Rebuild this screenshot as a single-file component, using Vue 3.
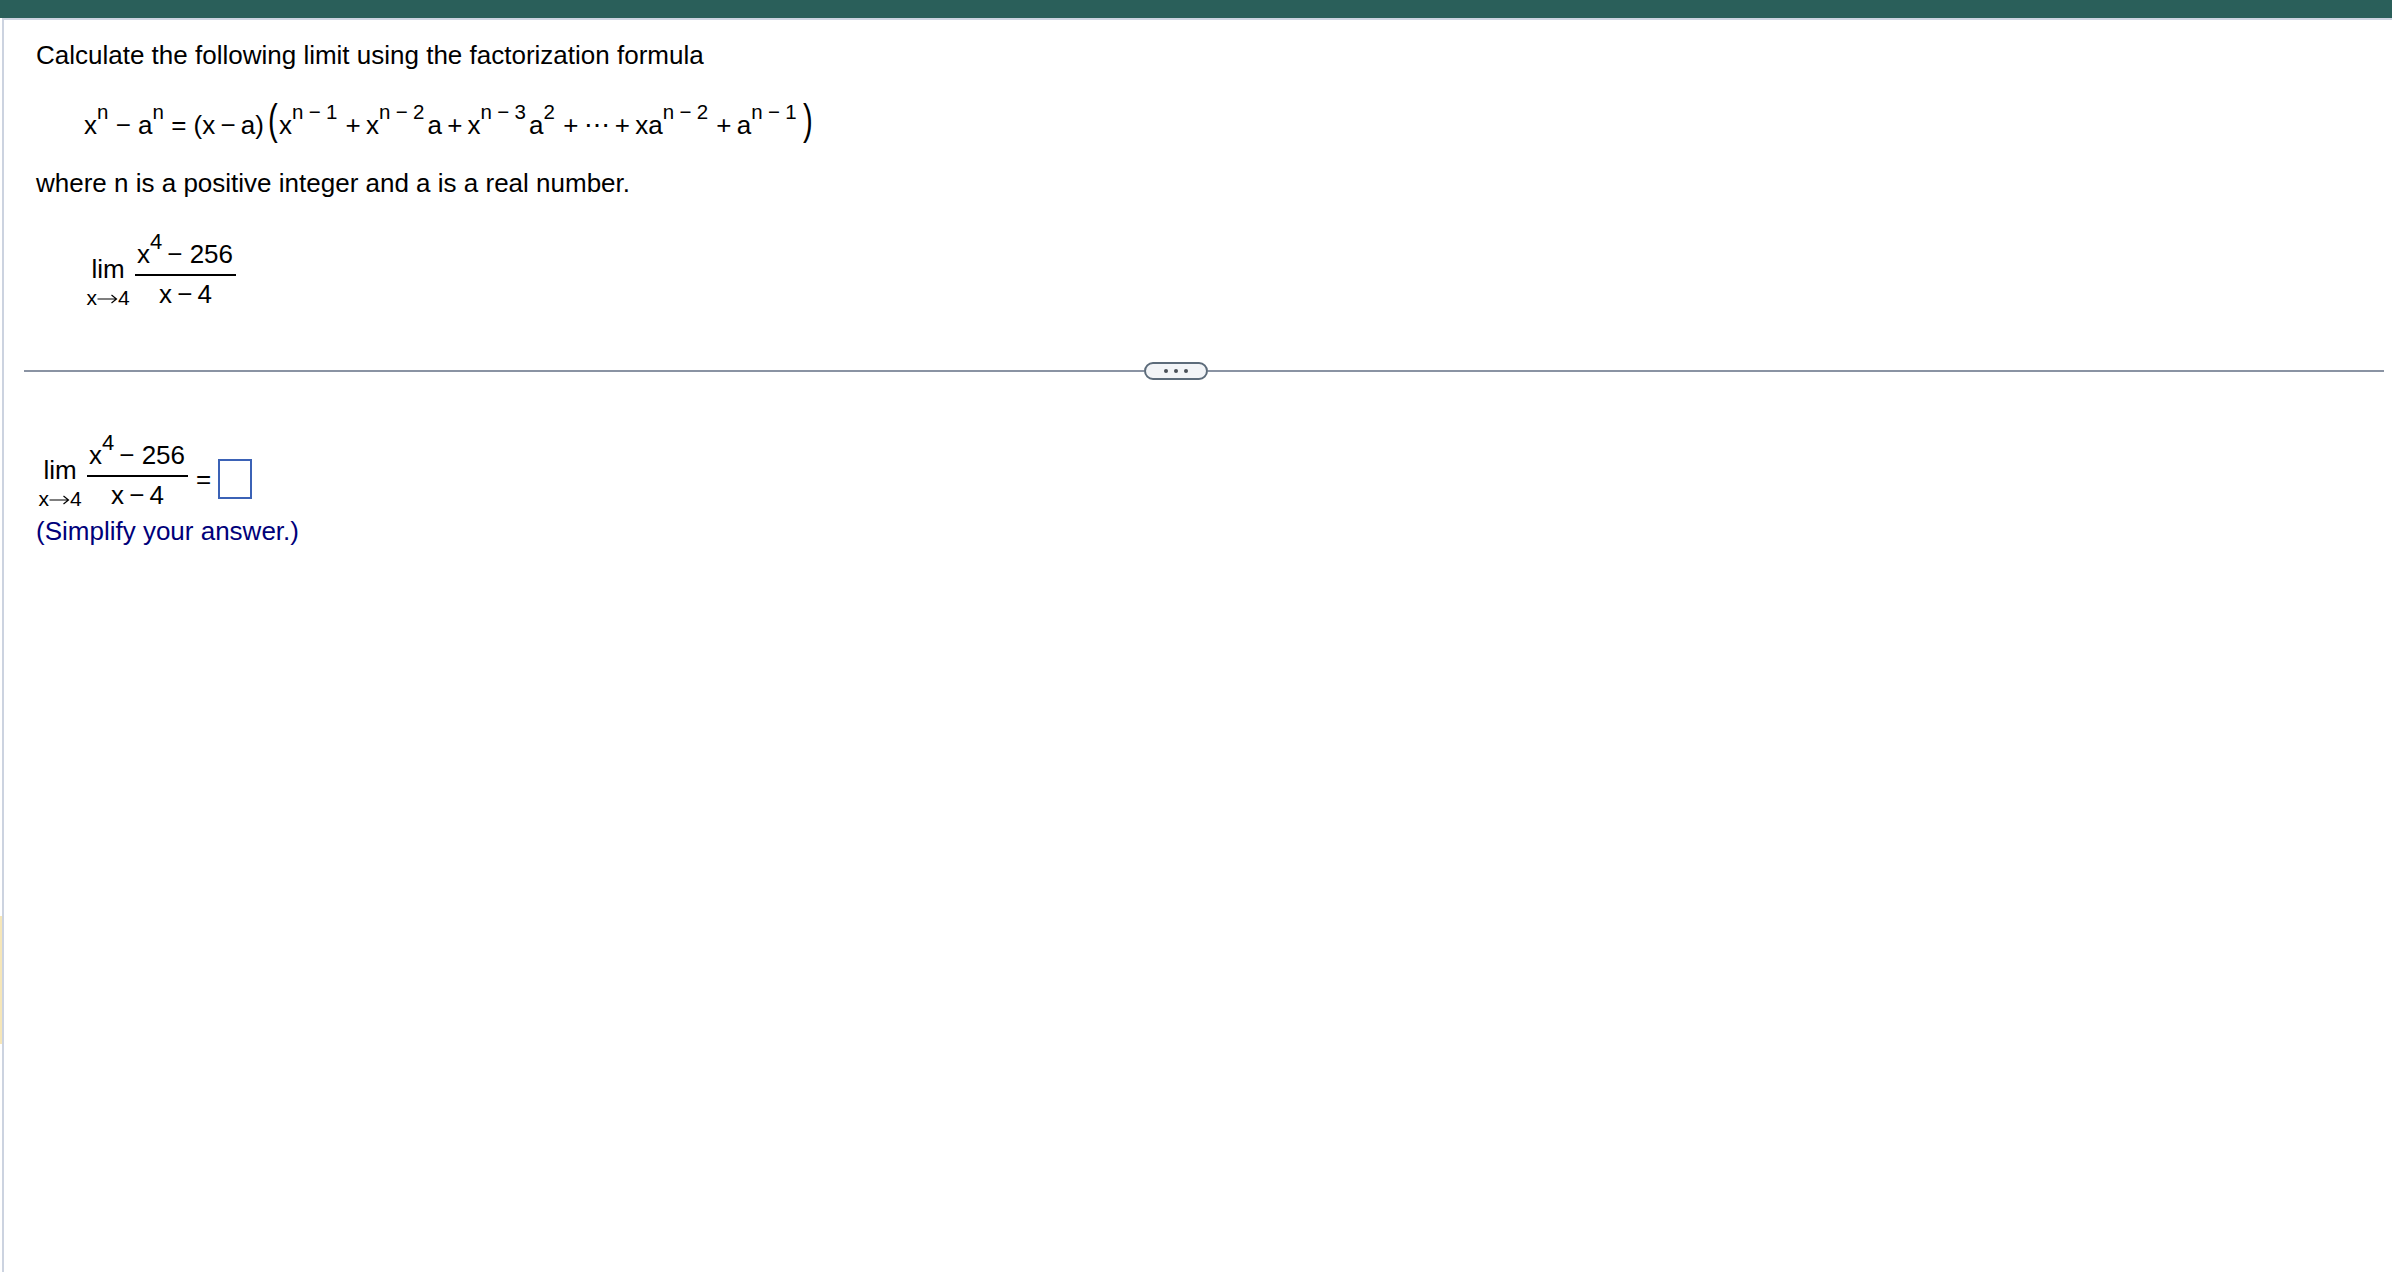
<script setup>
const thin = '\u2009'
const formula = [
  ['x', 'n'], [' − a', 'n'], [` = (x${thin}−${thin}a)`, '']
]
const sup = (a, b) => `${a}${thin}−${thin}${b}`
const inner = [
  ['x', sup('n', 1)],
  [`${thin}+${thin}x`, sup('n', 2)],
  [`a${thin}+${thin}x`, sup('n', 3)],
  ['a', '2'],
  [`${thin}+${thin}⋯${thin}+${thin}xa`, sup('n', 2)],
  [`${thin}+${thin}a`, sup('n', 1)]
]
const denominator = `x${thin}−${thin}4`
</script>

<template>
  <div class="page">
    <div class="topbar"></div>
    <div class="sheet">
      <div class="flag"></div>
      <section class="question">
        <p class="intro">Calculate the following limit using the factorization formula</p>
        <div class="formula">
          <template v-for="(t, i) in formula" :key="i"><span class="tx">{{ t[0] }}</span><sup v-if="t[1]" class="up">{{ t[1] }}</sup></template>
          <span class="paren left">(</span>
          <template v-for="(t, i) in inner" :key="'b' + i"><span class="tx">{{ t[0] }}</span><sup class="up wide">{{ t[1] }}</sup></template>
          <span class="paren right">)</span>
        </div>
        <p class="where">where n is a positive integer and a is a real number.</p>
        <div class="limit first">
          <div class="lim">
            <span class="word">lim</span>
            <span class="under">x<svg class="arrow" viewBox="0 0 20 12" width="21" height="12"><path d="M0 6H19M14 2L19 6L14 10" fill="none" stroke="#000" stroke-width="1.2" /></svg>4</span>
          </div>
          <div class="frac">
            <div class="num"><span>x</span><sup class="up four">4</sup><span class="minus">− 256</span></div>
            <div class="den">{{ denominator }}</div>
          </div>
        </div>
      </section>

      <div class="divider">
        <div class="rule"></div>
        <div class="pill"><i></i><i></i><i></i></div>
        <div class="rule"></div>
      </div>

      <section class="answer">
        <div class="limit">
          <div class="lim">
            <span class="word">lim</span>
            <span class="under">x<svg class="arrow" viewBox="0 0 20 12" width="21" height="12"><path d="M0 6H19M14 2L19 6L14 10" fill="none" stroke="#000" stroke-width="1.2" /></svg>4</span>
          </div>
          <div class="frac">
            <div class="num"><span>x</span><sup class="up four">4</sup><span class="minus">− 256</span></div>
            <div class="den">{{ denominator }}</div>
          </div>
          <span class="equals">=</span>
          <span class="box"></span>
        </div>
        <p class="hint">(Simplify your answer.)</p>
      </section>
    </div>
  </div>
</template>

<style>
html, body { margin: 0; background: #fff; }
</style>

<style scoped>
.page {
  width: 2392px;
  height: 1272px;
  overflow: hidden;
  font-family: "Liberation Sans", Arial, sans-serif;
  font-size: 26px;
  color: #000;
  display: flex;
  flex-direction: column;
  background: #fff;
}
.topbar { height: 18px; background: #2a5f5a; flex: none; }
.sheet {
  position: relative;
  flex: 1;
  border-top: 2px solid #ccd3e0;
  margin-left: 2px;
  border-left: 2px solid #ccd3e0;
}
.flag {
  position: absolute;
  left: -4px;
  top: 896px;
  width: 2px;
  height: 128px;
  background: #f6e6b8;
}
p { margin: 0; }
.question { padding: 20px 0 0 32px; height: 342px; box-sizing: border-box; }
.intro { line-height: 30px; }
.formula {
  margin: 35px 0 0 48px;
  height: 40px;
  line-height: 40px;
  white-space: pre;
  display: flex;
  align-items: baseline;
}
.tx { font-size: 26px; }
.up { font-size: 20.5px; line-height: 0; vertical-align: baseline; position: relative; top: -15px; }
.up.wide { letter-spacing: 0.6px; margin-right: 2.5px; }
.paren { font-size: 43px; line-height: 0; transform: scaleX(0.68); display: inline-block; width: 13px; text-align: center; }
.paren.left { margin-left: 2px; }
.paren.right { margin-left: 1px; }
.where { margin-top: 23px; line-height: 30px; }
.limit { display: flex; align-items: flex-start; height: 79px; }
.limit.first { margin: 35px 0 0 48px; }
.lim {
  display: flex;
  flex-direction: column;
  align-items: center;
  width: 48px;
}
.word { line-height: 28px; margin-top: 22px; }
.under { display: flex; align-items: center; font-size: 21px; line-height: 24px; margin-top: 3px; white-space: nowrap; }
.arrow { flex: none; margin: 1px 0 0; }
.frac { display: flex; flex-direction: column; align-items: stretch; width: 101px; margin-left: 3px; text-align: center; }
.num { border-bottom: 2px solid #000; height: 41px; line-height: 42px; white-space: pre; padding-left: 2px; text-align: left; }
.four { top: -14px; font-size: 22px; }
.minus { margin-left: 5px; }
.den { line-height: 36px; white-space: pre; }
.divider { display: grid; grid-template-columns: 1120px 64px 1fr; align-items: center; height: 18px; margin: 0 8px 0 20px; }
.rule { height: 2px; background: #8a93a3; }
.pill {
  width: 64px;
  height: 18px;
  box-sizing: border-box;
  border: 2.5px solid #5c6b7a;
  border-radius: 9px;
  background: #f2f4f7;
  display: flex;
  align-items: center;
  justify-content: center;
  gap: 6px;
}
.pill i { width: 4px; height: 4px; border-radius: 50%; background: #4a5058; }
.answer { padding: 54px 0 0 32px; }
.equals { margin: 30px 0 0 8px; line-height: 30px; }
.box {
  flex: none;
  width: 34px;
  height: 40px;
  box-sizing: border-box;
  border: 2px solid #3b62b6;
  margin: 25px 0 0 7px;
}
.hint { color: #00007a; line-height: 30px; margin-top: 3px; }
</style>
